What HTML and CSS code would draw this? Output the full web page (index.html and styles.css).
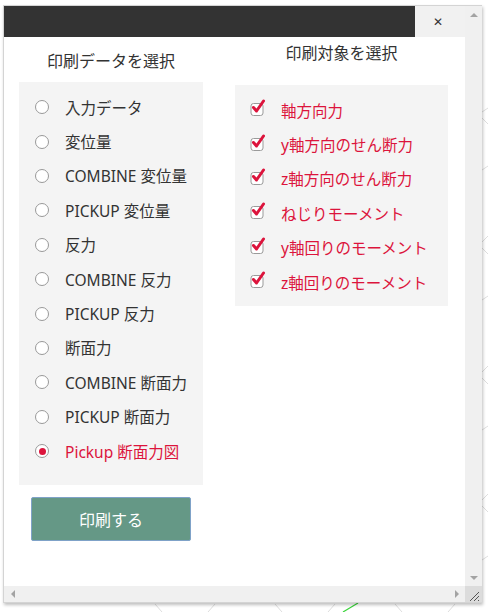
FILE: index.html
```html
<!DOCTYPE html>
<html lang="ja">
<head>
    <meta charset="UTF-8">
    <meta name="viewport" content="width=device-width, initial-scale=1.0">
    <title>印刷</title>
    <link rel="stylesheet" href="styles.css">
</head>
<body>
    <svg class="backdrop" width="488" height="612" viewBox="0 0 488 612">
        <g stroke="#dedede" stroke-width="1" fill="none">
            <path d="M482 112 L488 108 M482 118 L488 124 M482 170 L488 166 M482 242 L488 236 M482 248 L488 254 M482 300 L488 296 M482 372 L488 366 M482 378 L488 384 M482 430 L488 426 M482 500 L488 494 M482 506 L488 512 M482 560 L488 556"/>
            <path d="M155 604 L162 612 M215 604 L208 612 M275 604 L282 612 M335 604 L328 612 M395 604 L402 612 M455 604 L448 612"/>
        </g>
        <path d="M343 612 L358 603" stroke="#3ad43a" stroke-width="1.2"/>
    </svg>

    <div class="window">
        <div class="main">
            <div class="titlebar">
                <div class="titlebar-dark"></div>
                <div class="close">&#x2715;</div>
            </div>

            <div class="content">
                <div class="column">
                    <h2 class="column-title left-title">印刷データを選択</h2>
                    <div class="panel data-panel">
                        <label class="radio-row"><span class="radio"></span>入力データ</label>
                        <label class="radio-row"><span class="radio"></span>変位量</label>
                        <label class="radio-row"><span class="radio"></span>COMBINE 変位量</label>
                        <label class="radio-row"><span class="radio"></span>PICKUP 変位量</label>
                        <label class="radio-row"><span class="radio"></span>反力</label>
                        <label class="radio-row"><span class="radio"></span>COMBINE 反力</label>
                        <label class="radio-row"><span class="radio"></span>PICKUP 反力</label>
                        <label class="radio-row"><span class="radio"></span>断面力</label>
                        <label class="radio-row"><span class="radio"></span>COMBINE 断面力</label>
                        <label class="radio-row"><span class="radio"></span>PICKUP 断面力</label>
                        <label class="radio-row selected"><span class="radio checked"></span>Pickup 断面力図</label>
                    </div>
                    <button class="print-btn">印刷する</button>
                </div>

                <div class="column right-column">
                    <h2 class="column-title right-title">印刷対象を選択</h2>
                    <div class="panel target-panel">
                        <label class="check-row"><span class="check"><svg width="16" height="18" viewBox="0 0 16 18"><rect x="1" y="4.5" width="12" height="12" rx="2.5" fill="#fff" stroke="#9a9a9a"/><path d="M3.5 8.5 L6.5 12 L13.5 2" stroke="#dc143c" stroke-width="3" fill="none" stroke-linecap="round" stroke-linejoin="round"/></svg></span>軸方向力</label>
                        <label class="check-row"><span class="check"><svg width="16" height="18" viewBox="0 0 16 18"><rect x="1" y="4.5" width="12" height="12" rx="2.5" fill="#fff" stroke="#9a9a9a"/><path d="M3.5 8.5 L6.5 12 L13.5 2" stroke="#dc143c" stroke-width="3" fill="none" stroke-linecap="round" stroke-linejoin="round"/></svg></span>y軸方向のせん断力</label>
                        <label class="check-row"><span class="check"><svg width="16" height="18" viewBox="0 0 16 18"><rect x="1" y="4.5" width="12" height="12" rx="2.5" fill="#fff" stroke="#9a9a9a"/><path d="M3.5 8.5 L6.5 12 L13.5 2" stroke="#dc143c" stroke-width="3" fill="none" stroke-linecap="round" stroke-linejoin="round"/></svg></span>z軸方向のせん断力</label>
                        <label class="check-row"><span class="check"><svg width="16" height="18" viewBox="0 0 16 18"><rect x="1" y="4.5" width="12" height="12" rx="2.5" fill="#fff" stroke="#9a9a9a"/><path d="M3.5 8.5 L6.5 12 L13.5 2" stroke="#dc143c" stroke-width="3" fill="none" stroke-linecap="round" stroke-linejoin="round"/></svg></span>ねじりモーメント</label>
                        <label class="check-row"><span class="check"><svg width="16" height="18" viewBox="0 0 16 18"><rect x="1" y="4.5" width="12" height="12" rx="2.5" fill="#fff" stroke="#9a9a9a"/><path d="M3.5 8.5 L6.5 12 L13.5 2" stroke="#dc143c" stroke-width="3" fill="none" stroke-linecap="round" stroke-linejoin="round"/></svg></span>y軸回りのモーメント</label>
                        <label class="check-row"><span class="check"><svg width="16" height="18" viewBox="0 0 16 18"><rect x="1" y="4.5" width="12" height="12" rx="2.5" fill="#fff" stroke="#9a9a9a"/><path d="M3.5 8.5 L6.5 12 L13.5 2" stroke="#dc143c" stroke-width="3" fill="none" stroke-linecap="round" stroke-linejoin="round"/></svg></span>z軸回りのモーメント</label>
                    </div>
                </div>
            </div>
        </div>

        <!-- scrollbars -->
        <div class="vscroll">
            <span class="arrow-up"></span>
            <span class="arrow-down"></span>
        </div>
        <div class="hscroll">
            <span class="arrow-left"></span>
            <span class="arrow-right"></span>
        </div>
        <div class="corner">
            <svg width="17" height="16" viewBox="0 0 17 16">
                <path d="M5 14 L14 5 M9 14 L14 9 M13 14 L14 13" stroke="#555" stroke-width="1"/>
            </svg>
        </div>
    </div>
</body>
</html>
```

FILE: styles.css
```css
* {
    margin: 0;
    padding: 0;
    box-sizing: border-box;
}

body {
    font-family: 'Noto Sans', 'Noto Sans CJK JP', sans-serif;
    background: #fff;
    color: #333;
    width: 488px;
    height: 612px;
    overflow: hidden;
    position: relative;
}

.backdrop {
    position: absolute;
    left: 0;
    top: 0;
}

.window {
    position: relative;
    margin: 5px 0 0 3px;
    width: 479px;
    height: 598px;
    background: #fff;
    border: 1px solid #d4d4d4;
    box-shadow: 1px 2px 3px rgba(0, 0, 0, 0.25);
    display: grid;
    grid-template-columns: 461px 17px;
    grid-template-rows: 580px 16px;
}

.main {
    display: flex;
    flex-direction: column;
    overflow: hidden;
}

.titlebar {
    display: flex;
    height: 31px;
}

.titlebar-dark {
    flex: 1;
    background: #333;
}

.close {
    width: 50px;
    background: #f1f1f1;
    color: #333;
    font-size: 12px;
    display: flex;
    align-items: center;
    justify-content: center;
    padding-right: 4px;
}

.content {
    display: flex;
    padding-left: 15px;
    gap: 32px;
}

.column {
    width: 184px;
    display: flex;
    flex-direction: column;
}

.right-column {
    width: 213px;
}

.column-title {
    font-size: 16px;
    font-weight: normal;
    text-align: center;
    color: #333;
    line-height: 22px;
}

.left-title {
    margin-top: 13px;
    margin-bottom: 10px;
}

.right-title {
    margin-top: 5px;
    margin-bottom: 21px;
}

.panel {
    background: #f4f4f4;
}

.data-panel {
    padding: 8px 0 17px 0;
}

.target-panel {
    padding: 8px 0 7px 0;
}

.radio-row,
.check-row {
    display: flex;
    align-items: center;
    height: 34.4px;
    font-size: 15.5px;
    white-space: nowrap;
}

.radio-row {
    padding-left: 16px;
    color: #333;
}

.radio-row.selected {
    color: #dc143c;
}

.radio {
    width: 14px;
    height: 14px;
    border: 1px solid #999;
    border-radius: 50%;
    background: #fff;
    margin-right: 16px;
    display: flex;
    align-items: center;
    justify-content: center;
}

.radio.checked::after {
    content: "";
    width: 7px;
    height: 7px;
    border-radius: 50%;
    background: #dc143c;
}

.check-row {
    padding-left: 15px;
    color: #dc143c;
}

.check {
    width: 16px;
    height: 18px;
    margin-right: 15px;
    margin-top: -4px;
}

.check svg {
    display: block;
}

.print-btn {
    margin: 12px 0 0 12px;
    width: 160px;
    height: 44px;
    background: #659886;
    border: 1px solid #7fa2c8;
    border-radius: 2px;
    color: #fff;
    font-family: 'Noto Sans', 'Noto Sans CJK JP', sans-serif;
    font-size: 16px;
}

/* fake scrollbars */
.vscroll {
    background: #f0f0f0;
    position: relative;
}

.hscroll {
    background: #f0f0f0;
    position: relative;
}

.corner {
    background: #dcdcdc;
}

.arrow-up,
.arrow-down,
.arrow-left,
.arrow-right {
    position: absolute;
    width: 0;
    height: 0;
}

.arrow-up {
    left: 5px;
    top: 7px;
    border-left: 4px solid transparent;
    border-right: 4px solid transparent;
    border-bottom: 4px solid #a3a3a3;
}

.arrow-down {
    left: 5px;
    bottom: 6px;
    border-left: 4px solid transparent;
    border-right: 4px solid transparent;
    border-top: 4px solid #a3a3a3;
}

.arrow-left {
    left: 7px;
    top: 4px;
    border-top: 4px solid transparent;
    border-bottom: 4px solid transparent;
    border-right: 4px solid #a3a3a3;
}

.arrow-right {
    right: 6px;
    top: 4px;
    border-top: 4px solid transparent;
    border-bottom: 4px solid transparent;
    border-left: 4px solid #a3a3a3;
}
```
